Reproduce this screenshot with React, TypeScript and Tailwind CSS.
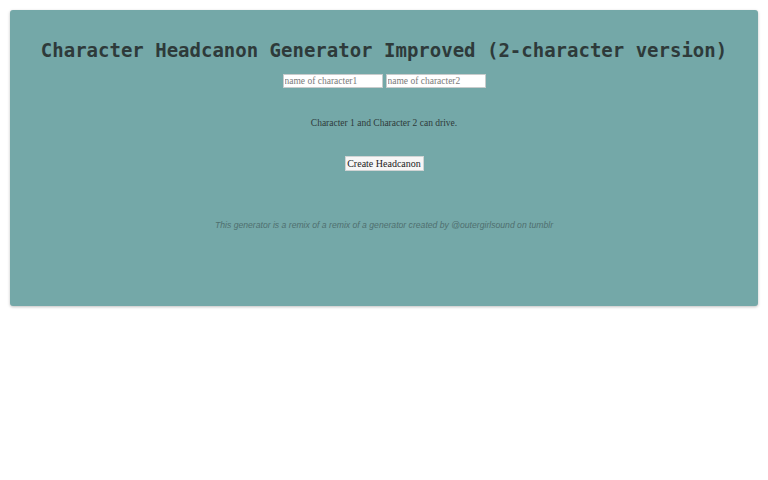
export default function App() {
  return (
    <div className="min-h-[480px] bg-white p-[10px]">
      <div className="flex h-[296px] flex-col items-center rounded-[3px] bg-[#74a8a8] shadow-[0_1px_3px_rgba(0,0,0,0.25)]">
        <h1 className="mt-[28px] font-['DejaVu_Sans_Mono',monospace] text-[19px] leading-[24px] font-bold text-[#2e3a3a]">
          Character Headcanon Generator Improved (2-character version)
        </h1>
        <div className="mt-[12px] flex gap-[3px] font-['Liberation_Serif',serif]">
          <input
            placeholder="name of character1"
            className="h-[14px] w-[100px] border border-[#c8cccc] bg-white px-[1px] text-[9.5px] leading-[12px] text-black placeholder:text-[#7a7a7a] outline-none"
          />
          <input
            placeholder="name of character2"
            className="h-[14px] w-[100px] border border-[#c8cccc] bg-white px-[1px] text-[9.5px] leading-[12px] text-black placeholder:text-[#7a7a7a] outline-none"
          />
        </div>
        <p className="mt-[29px] font-['Liberation_Serif',serif] text-[9.5px] leading-[12px] text-[#2e3a3a]">
          Character 1 and Character 2 can drive.
        </p>
        <button className="mt-[27px] h-[15px] w-[79px] border border-[#d0d4d4] bg-[#f6f6f6] font-['Liberation_Serif',serif] text-[10px] leading-[12px] text-[#222]">
          Create Headcanon
        </button>
        <p className="mt-[49px] font-['Liberation_Sans',sans-serif] text-[8.65px] leading-[10px] text-[#4f6f6f] italic">
          This generator is a remix of a remix of a generator created by @outergirlsound on tumblr
        </p>
      </div>
    </div>
  );
}
